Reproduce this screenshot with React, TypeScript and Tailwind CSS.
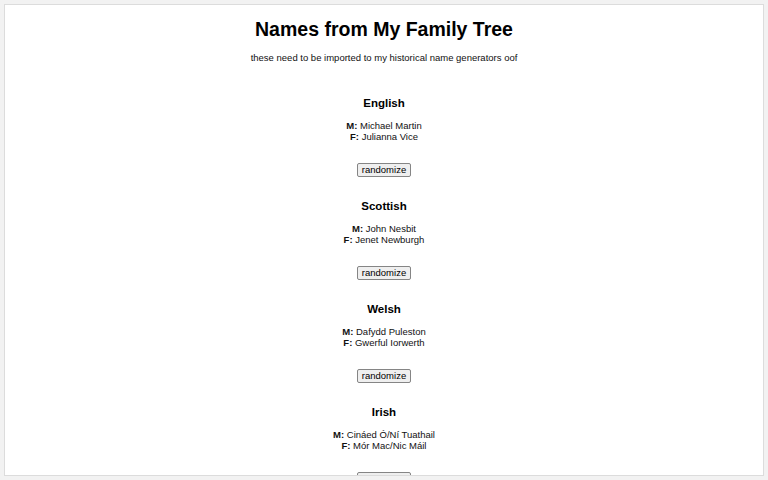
import React, { useState } from 'react';

type Origin = {
  name: string;
  male: string;
  female: string;
};

const origins: Origin[] = [
  { name: 'English', male: 'Michael Martin', female: 'Julianna Vice' },
  { name: 'Scottish', male: 'John Nesbit', female: 'Jenet Newburgh' },
  { name: 'Welsh', male: 'Dafydd Puleston', female: 'Gwerful Iorwerth' },
  { name: 'Irish', male: 'Cináed Ó/Ní Tuathail', female: 'Mór Mac/Nic Máil' },
];

const NameBlock: React.FC<{ origin: Origin }> = ({ origin }) => {
  const [pair] = useState(origin);
  return (
    <section className="flex flex-col items-center">
      <h3 className="text-[11.5px] leading-[15px] font-bold text-black">{pair.name}</h3>
      <div className="mt-[9px] text-[9.5px] leading-[11px] text-[#111] text-center">
        <div>
          <b>M:</b> {pair.male}
        </div>
        <div>
          <b>F:</b> {pair.female}
        </div>
      </div>
      <button className="mt-[21px] mb-[22px] h-[14px] px-[4px] text-[9.5px] leading-[12px] bg-[#efefef] border border-[#858585] rounded-[2px] text-black">
        randomize
      </button>
    </section>
  );
};

export default function App() {
  return (
    <div
      className="h-[480px] bg-[#f2f2f2] p-[4px]"
      style={{ fontFamily: '"Liberation Sans", Arial, sans-serif' }}
    >
      <div className="h-[472px] bg-white border border-[#dcdcdc] overflow-hidden flex flex-col items-center">
        <h1 className="mt-[11px] text-[19.5px] leading-[26px] font-bold text-black">
          Names from My Family Tree
        </h1>
        <p className="mt-[10px] text-[9.5px] leading-[12px] text-[#111]">
          these need to be imported to my historical name generators oof
        </p>
        <div className="mt-[32px] flex flex-col items-center">
          {origins.map((o) => (
            <NameBlock key={o.name} origin={o} />
          ))}
        </div>
      </div>
    </div>
  );
}
